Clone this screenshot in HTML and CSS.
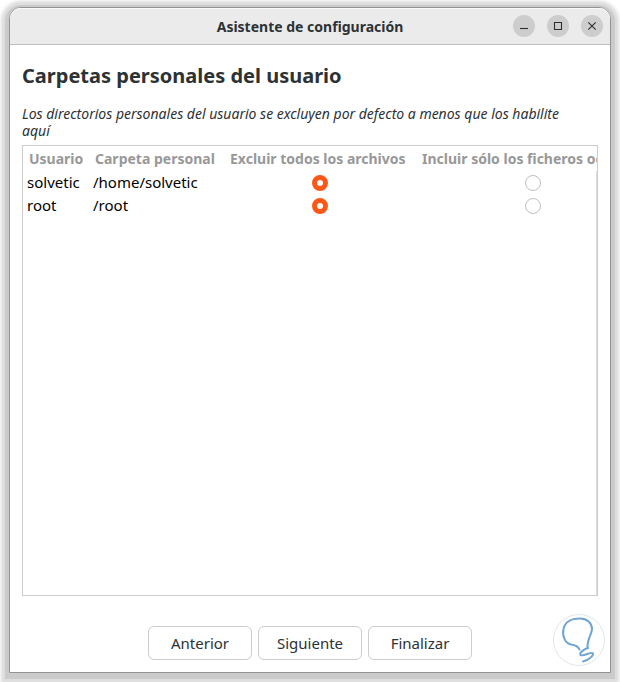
FILE: index.html
```html
<!DOCTYPE html>
<html lang="es">
<head>
<meta charset="utf-8">
<meta name="viewport" content="width=device-width, initial-scale=1">
<title>Asistente de configuración</title>
<link rel="stylesheet" href="styles.css">
</head>
<body>
<div class="window">
  <header class="titlebar">
    <span class="titlebar-text">Asistente de configuración</span>
    <div class="window-controls">
      <button class="control" type="button" aria-label="Minimizar"><svg viewBox="0 0 22 22"><path d="M7 13.5h8"/></svg></button>
      <button class="control" type="button" aria-label="Maximizar"><svg viewBox="0 0 22 22"><path d="M7.500 7.500h7v7h-7z"/></svg></button>
      <button class="control" type="button" aria-label="Cerrar"><svg viewBox="0 0 22 22"><path d="M7.300 7.300l7.400 7.400M14.700 7.300l-7.400 7.400"/></svg></button>
    </div>
  </header>
  <main class="content">
    <h1 class="heading">Carpetas personales del usuario</h1>
    <p class="description">Los directorios personales del usuario se excluyen por defecto a menos que los habilite aquí</p>
    <div class="table-frame">
      <table class="folders">
        <colgroup>
          <col class="col-user">
          <col class="col-folder">
          <col class="col-exclude">
          <col class="col-include">
        </colgroup>
        <thead>
          <tr>
            <th scope="col">Usuario</th>
            <th scope="col">Carpeta personal</th>
            <th scope="col">Excluir todos los archivos</th>
            <th scope="col">Incluir sólo los ficheros ocultos</th>
          </tr>
        </thead>
        <tbody>
          <tr>
            <td>solvetic</td>
            <td>/home/solvetic</td>
            <td class="choice"><input class="radio" type="radio" name="solvetic" aria-label="Excluir todos los archivos de solvetic" checked></td>
            <td class="choice"><input class="radio" type="radio" name="solvetic" aria-label="Incluir sólo los ficheros ocultos de solvetic"></td>
          </tr>
          <tr>
            <td>root</td>
            <td>/root</td>
            <td class="choice"><input class="radio" type="radio" name="root" aria-label="Excluir todos los archivos de root" checked></td>
            <td class="choice"><input class="radio" type="radio" name="root" aria-label="Incluir sólo los ficheros ocultos de root"></td>
          </tr>
        </tbody>
      </table>
      <div class="scroll-edge"></div>
    </div>
  </main>
  <footer class="actions">
    <button class="action" type="button">Anterior</button>
    <button class="action" type="button">Siguiente</button>
    <button class="action" type="button">Finalizar</button>
  </footer>
  <svg class="badge" viewBox="0 0 52 52" aria-hidden="true">
    <circle class="badge-ring" cx="26" cy="26" r="25.500"/>
    <path class="badge-bulb" d="M26.500 35.500C25 32 22 31 18 30.500C12 29 9 22 10.500 15C12 7 20 4.500 27 4.500C34 4.500 39 9 39 15C39 20 34 25 34.500 34"/>
    <path class="badge-base" d="M35 34C31 35 26 39 27.500 41C30 43 39 37 40 39.500C40.500 42 35 46.500 30 47.500"/>
  </svg>
</div>
</body>
</html>
```
FILE: styles.css
```css
* {
  box-sizing: border-box;
}

body {
  margin: 0;
  padding: 7px 9px 9px;
  background: #fff;
  color: #2d3234;
  font: 14px/17px "Noto Sans", "Open Sans", sans-serif;
}

button {
  font: inherit;
  color: inherit;
  padding: 0;
}

.window {
  position: relative;
  display: flex;
  flex-direction: column;
  min-height: calc(100vh - 16px);
  border: 1px solid #929292;
  border-radius: 12px 12px 0 0;
  background: #fff;
  box-shadow: 0 2px 0 4px #cbcbcb, 0 2px 2px 7px #dedede, 0 2px 3px 9px #ededed;
}

.titlebar {
  position: relative;
  display: flex;
  align-items: center;
  justify-content: center;
  height: 37px;
  background: #ebebeb;
  border-bottom: 1px solid #bebebe;
  border-radius: 11px 11px 0 0;
  box-shadow: inset 0 1px #f8f8f8;
}

.titlebar-text {
  font-weight: 700;
}

.window-controls {
  position: absolute;
  right: 7px;
  display: flex;
  gap: 12px;
}

.control {
  width: 22px;
  height: 22px;
  border: 0;
  border-radius: 50%;
  background: #cdcdcd;
}

.control svg {
  display: block;
  fill: none;
  stroke: #2d2d2d;
  stroke-width: 1.1;
}

.content {
  flex: 1;
  display: flex;
  flex-direction: column;
  padding: 17px 12px 0;
}

.heading {
  margin: 0 0 15px;
  font-size: 20px;
  line-height: 28px;
  font-weight: 700;
}

.description {
  margin: 0 0 6px;
  padding-right: 24px;
  font-style: italic;
}

.table-frame {
  flex: 1;
  position: relative;
  overflow: hidden;
  border: 1px solid #cdcdcd;
}

.scroll-edge {
  position: absolute;
  top: 25px;
  right: 0;
  bottom: 0;
  width: 1px;
  background: #dedede;
}

.folders {
  width: 627px;
  table-layout: fixed;
  border-collapse: collapse;
}

.col-user {
  width: 66px;
}

.col-folder {
  width: 135px;
}

.col-exclude {
  width: 192px;
}

.col-include {
  width: 234px;
}

.folders th {
  height: 25px;
  padding: 0 6px;
  color: #989898;
  font-weight: 700;
  text-align: left;
  white-space: nowrap;
}

.folders td {
  height: 23px;
  padding: 0 4px;
  color: #000;
  font-size: 15px;
}

.folders .choice {
  text-align: center;
}

.radio {
  appearance: none;
  display: block;
  width: 16px;
  height: 16px;
  margin: 0 auto;
  border: 1px solid #bfbfbf;
  border-radius: 50%;
  background: #fff;
}

.radio:checked {
  border: 5px solid #fc5719;
}

.actions {
  display: flex;
  justify-content: center;
  gap: 6px;
  padding: 30px 12px 12px;
}

.action {
  width: 104px;
  height: 34px;
  border: 1px solid #cdcdcd;
  border-radius: 6px;
  background: #fff;
  font-size: 15px;
}

.badge {
  position: absolute;
  right: 5px;
  bottom: 6px;
  width: 52px;
  height: 52px;
  fill: none;
  stroke-linecap: round;
  stroke-linejoin: round;
}

.badge-ring {
  fill: #fff;
  stroke: #dfe7ed;
}

.badge-bulb,
.badge-base {
  stroke: #70a5d2;
  stroke-width: 2;
}
```
